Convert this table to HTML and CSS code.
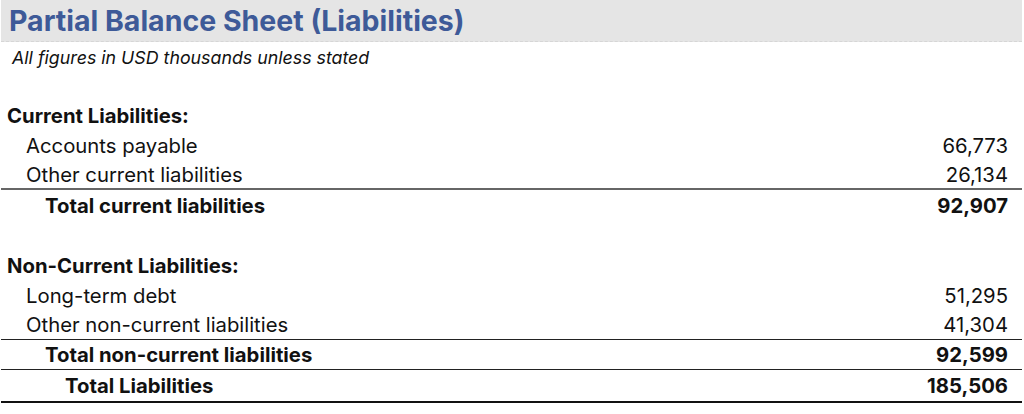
FILE: index.html
```html
<!DOCTYPE html>
<html>
<head>
<meta charset="utf-8">
<link rel="stylesheet" href="styles.css">
</head>
<body>
<div class="sheet">
  <div class="header"><h1 class="title">Partial Balance Sheet (Liabilities)</h1></div>
  <div class="subtitle">All figures in USD thousands unless stated</div>
  <div class="spacer"></div>
  <div class="row section"><span class="label">Current Liabilities:</span><span class="value"></span></div>
  <div class="row item"><span class="label">Accounts payable</span><span class="value">66,773</span></div>
  <div class="row item rule-gray"><span class="label">Other current liabilities</span><span class="value">26,134</span></div>
  <div class="row total"><span class="label">Total current liabilities</span><span class="value">92,907</span></div>
  <div class="row blank"></div>
  <div class="row section"><span class="label">Non-Current Liabilities:</span><span class="value"></span></div>
  <div class="row item"><span class="label">Long-term debt</span><span class="value">51,295</span></div>
  <div class="row item rule-dark"><span class="label">Other non-current liabilities</span><span class="value">41,304</span></div>
  <div class="row total rule-dark"><span class="label">Total non-current liabilities</span><span class="value">92,599</span></div>
  <div class="row grand rule-black"><span class="label">Total Liabilities</span><span class="value">185,506</span></div>
</div>
</body>
</html>
```

FILE: styles.css
```css
* { box-sizing: border-box; }
html, body { margin: 0; padding: 0; background: #ffffff; }
body { font-family: "Inter", "Noto Sans", sans-serif; color: #111; }
.sheet { padding: 0 2px 0 1px; }
.header {
  height: 42px;
  background: #e5e5e5;
  border-bottom: 1px dashed #d6d6d6;
  display: flex;
  align-items: center;
  padding-left: 8px;
}
.title {
  margin: 0;
  font-size: 28.5px;
  font-weight: 700;
  color: #3e5a98;
  letter-spacing: 0;
}
.subtitle {
  height: 30px;
  display: flex;
  align-items: center;
  padding-left: 11px;
  font-size: 17.8px;
  font-style: italic;
  color: #111;
}
.spacer { height: 28px; }
.row {
  height: 30px;
  display: flex;
  align-items: center;
  justify-content: space-between;
  font-size: 20.3px;
  padding-right: 14px;
}
.row .label { white-space: nowrap; }
.section { font-weight: 700; padding-left: 6px; }
.item { padding-left: 25px; }
.total { font-weight: 700; padding-left: 44px; }
.grand { font-weight: 700; padding-left: 64px; height: 33px; }
.rule-gray { border-bottom: 2px solid #666; }
.rule-dark { border-bottom: 1px solid #222; }
.rule-black { border-bottom: 2px solid #111; }
```
